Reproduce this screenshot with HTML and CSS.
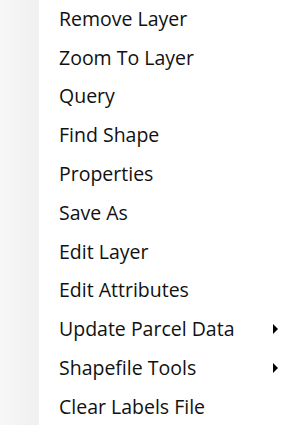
FILE: index.html
```html
<!DOCTYPE html>
<html>
<head>
<meta charset="utf-8">
<link rel="stylesheet" href="styles.css">
</head>
<body>
<div class="menu">
  <div class="gutter"></div>
  <ul class="items">
    <li class="item">Remove Layer</li>
    <li class="item">Zoom To Layer</li>
    <li class="item">Query</li>
    <li class="item">Find Shape</li>
    <li class="item">Properties</li>
    <li class="item">Save As</li>
    <li class="item">Edit Layer</li>
    <li class="item">Edit Attributes</li>
    <li class="item sub">Update Parcel Data<span class="arrow"></span></li>
    <li class="item sub">Shapefile Tools<span class="arrow"></span></li>
    <li class="item">Clear Labels File</li>
  </ul>
</div>
</body>
</html>
```
FILE: styles.css
```css
html, body {
  margin: 0;
  padding: 0;
  background: #ffffff;
}
.menu {
  display: flex;
  width: 298px;
  height: 425px;
  overflow: hidden;
}
.gutter {
  width: 39px;
  flex: none;
  background: linear-gradient(to right, #f7f7f7, #f0f0f0);
}
.items {
  list-style: none;
  margin: 0;
  padding: 0 0 0 20px;
  flex: 1;
  display: flex;
  flex-direction: column;
}
.item {
  height: 38.8px;
  flex: none;
  display: flex;
  align-items: center;
  font-family: "Open Sans", "DejaVu Sans", sans-serif;
  font-size: 19.5px;
  color: #111111;
  position: relative;
  white-space: nowrap;
}
.item:first-child {
  margin-top: -1px;
}
.arrow {
  position: absolute;
  left: 214px;
  top: 50%;
  margin-top: -5px;
  width: 0;
  height: 0;
  border-top: 5px solid transparent;
  border-bottom: 5px solid transparent;
  border-left: 5px solid #000;
}
```
